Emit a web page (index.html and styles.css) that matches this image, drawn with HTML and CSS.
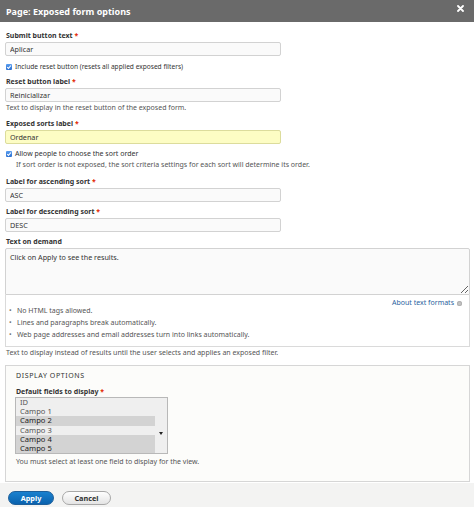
FILE: index.html
```html
<!DOCTYPE html>
<html lang="en">
<head>
<meta charset="utf-8">
<title>Page: Exposed form options</title>
<link rel="stylesheet" href="styles.css">
</head>
<body>
<div class="dialog">
  <div class="titlebar">
    <span class="title">Page: Exposed form options</span>
    <span class="close" aria-label="Close"><svg width="7" height="7" viewBox="0 0 7 7"><path d="M1 1L6 6M6 1L1 6" stroke="#fff" stroke-width="1.8" stroke-linecap="round"/></svg></span>
  </div>
  <div class="content">
    <div class="item wide">
      <label class="lbl">Submit button text <span class="req">*</span></label>
      <input class="text" type="text" value="Aplicar">
    </div>
    <div class="item check">
      <span class="cb"><svg width="6" height="6" viewBox="0 0 6 6"><path d="M1.2 3.1L2.5 4.4L4.9 1.5" fill="none" stroke="#fff" stroke-width="1.1"/></svg></span>
      <span class="cbtext">Include reset button (resets all applied exposed filters)</span>
    </div>
    <div class="item wide">
      <label class="lbl">Reset button label <span class="req">*</span></label>
      <input class="text" type="text" value="Reinicializar">
      <div class="desc">Text to display in the reset button of the exposed form.</div>
    </div>
    <div class="item">
      <label class="lbl">Exposed sorts label <span class="req">*</span></label>
      <input class="text warn" type="text" value="Ordenar">
    </div>
    <div class="item check tight">
      <span class="cb"><svg width="6" height="6" viewBox="0 0 6 6"><path d="M1.2 3.1L2.5 4.4L4.9 1.5" fill="none" stroke="#fff" stroke-width="1.1"/></svg></span>
      <span>Allow people to choose the sort order</span>
    </div>
    <div class="desc indent">If sort order is not exposed, the sort criteria settings for each sort will determine its order.</div>
    <div class="item">
      <label class="lbl">Label for ascending sort <span class="req">*</span></label>
      <input class="text" type="text" value="ASC">
    </div>
    <div class="item">
      <label class="lbl">Label for descending sort <span class="req">*</span></label>
      <input class="text" type="text" value="DESC">
    </div>
    <div class="item">
      <label class="lbl">Text on demand</label>
      <textarea class="area">Click on Apply to see the results.</textarea>
      <div class="filter">
        <div class="about"><a href="#">About text formats</a><span class="help"></span></div>
        <ul class="tips">
          <li>No HTML tags allowed.</li>
          <li>Lines and paragraphs break automatically.</li>
          <li>Web page addresses and email addresses turn into links automatically.</li>
        </ul>
      </div>
      <div class="desc">Text to display instead of results until the user selects and applies an exposed filter.</div>
    </div>
    <div class="fieldset">
      <div class="legend">DISPLAY OPTIONS</div>
      <label class="lbl">Default fields to display <span class="req">*</span></label>
      <div class="select">
        <div class="opts">
          <div class="opt">ID</div>
          <div class="opt">Campo 1</div>
          <div class="opt sel">Campo 2</div>
          <div class="opt">Campo 3</div>
          <div class="opt sel">Campo 4</div>
          <div class="opt sel">Campo 5</div>
        </div>
        <div class="scroll"><span class="arrow"></span></div>
      </div>
      <div class="desc">You must select at least one field to display for the view.</div>
    </div>
  </div>
  <div class="buttons">
    <button class="btn primary" type="button">Apply</button>
    <button class="btn" type="button">Cancel</button>
  </div>
</div>
</body>
</html>
```
FILE: styles.css
```css
html, body {
  margin: 0;
  padding: 0;
  background: #fff;
}
body {
  font-family: "Noto Sans", "DejaVu Sans", sans-serif;
  font-size: 7px;
  color: #333;
}
.dialog {
  width: 474px;
  height: 507px;
  display: flex;
  flex-direction: column;
  overflow: hidden;
}
.titlebar {
  height: 22px;
  flex: none;
  background: #6a6a6a;
  display: flex;
  align-items: center;
  justify-content: space-between;
  padding: 0 10px 0 6px;
  box-sizing: border-box;
}
.title {
  color: #fff;
  font-weight: 700;
  font-size: 9px;
}
.close {
  display: flex;
  margin-top: -6px;
}
.content {
  flex: 1;
  padding: 9px 4px 0 5px;
}
.item {
  margin-bottom: 5px;
}
.item.wide {
  margin-bottom: 6px;
}
.item.tight {
  margin-bottom: 1px;
}
.lbl {
  display: block;
  font-weight: 700;
  font-size: 7px;
  line-height: 10px;
  padding-left: 1px;
  margin-bottom: 1px;
  color: #333;
}
.req {
  color: #e32700;
}
.text {
  display: block;
  width: 276px;
  height: 14px;
  box-sizing: border-box;
  margin: 0;
  padding: 0 4px;
  border: 1px solid #d2d2d2;
  border-radius: 2px;
  background: #fafafa;
  font-family: inherit;
  font-size: 7.2px;
  color: #333;
  outline: none;
}
.text.warn {
  background: #fdfdc4;
  border-color: #dcdc9c;
}
.check {
  display: flex;
  align-items: center;
  height: 10px;
  line-height: 10px;
  padding-left: 1px;
}
.cbtext {
  font-size: 6.6px;
}
.cb {
  width: 6px;
  height: 6px;
  border-radius: 1px;
  background: linear-gradient(#5a9ef0, #2a6fd0);
  display: flex;
  margin-right: 3px;
}
.desc {
  line-height: 10px;
  margin-top: 1px;
  padding-left: 1px;
  color: #555;
}
.desc.indent {
  padding-left: 11px;
  margin-top: 0;
  margin-bottom: 7px;
}
.area {
  display: block;
  width: 465px;
  height: 47px;
  box-sizing: border-box;
  margin: 0;
  padding: 3px 4px;
  border: 1px solid #d2d2d2;
  border-radius: 2px 2px 0 0;
  background: #fafafa;
  font-family: inherit;
  font-size: 7.2px;
  color: #333;
  resize: vertical;
  outline: none;
}
.filter {
  width: 465px;
  box-sizing: border-box;
  border: 1px solid #dadada;
  border-top: none;
  padding: 5px 7px 5px 0;
}
.about {
  display: flex;
  justify-content: flex-end;
  align-items: center;
  line-height: 6px;
  height: 6px;
}
.about a {
  color: #2a5f9e;
  text-decoration: none;
  font-size: 7px;
}
.help {
  width: 5px;
  height: 5px;
  margin-left: 3px;
  border-radius: 50%;
  background: #c4c4c4;
  box-shadow: inset 0 0 0 1px #b0b0b0;
}
.tips {
  list-style: none;
  margin: -1px 0 0;
  padding: 0 0 0 3px;
  line-height: 12px;
  color: #555;
}
.tips li::before {
  content: "\2022";
  display: inline-block;
  width: 8px;
  color: #777;
}
.fieldset {
  margin-top: 7px;
  width: 465px;
  height: 117px;
  box-sizing: border-box;
  border: 1px solid #d6d6d6;
  background: #fcfcfa;
  padding: 5px 9px 0;
}
.legend {
  line-height: 10px;
  font-size: 7px;
  letter-spacing: 0.6px;
  color: #333;
  margin-bottom: 6px;
  padding-left: 1px;
}
.fieldset .lbl {
  margin-bottom: 0;
}
.select {
  width: 153px;
  height: 57px;
  box-sizing: border-box;
  border: 1px solid #b8b8b8;
  background: #efefef;
  display: flex;
  overflow: hidden;
}
.opts {
  flex: 1;
}
.opt {
  height: 9.2px;
  line-height: 9.2px;
  font-size: 7.6px;
  padding-left: 4px;
  color: #555;
  overflow: hidden;
}
.opt.sel {
  background: #d3d3d3;
  color: #222;
}
.scroll {
  width: 12px;
  display: flex;
  justify-content: center;
  align-items: flex-start;
  padding-top: 34px;
  box-sizing: border-box;
}
.arrow {
  width: 0;
  height: 0;
  border-left: 2px solid transparent;
  border-right: 2px solid transparent;
  border-top: 3px solid #222;
}
.fieldset .desc {
  margin-top: 3px;
}
.buttons {
  flex: none;
  height: 24px;
  background: #f3f3f2;
  display: flex;
  align-items: flex-start;
  gap: 8px;
  padding: 8px 0 0 8px;
  box-sizing: border-box;
}
.btn {
  height: 14px;
  margin: 0;
  padding: 0;
  border-radius: 7px;
  font-family: inherit;
  font-size: 7.3px;
  font-weight: 700;
  line-height: 12px;
  cursor: pointer;
  width: 49px;
  border: 1px solid #a8a8a8;
  background: linear-gradient(#fefefe, #e4e4e4);
  color: #333;
}
.btn.primary {
  width: 46px;
  border-color: #1d5f9a;
  background: linear-gradient(#1a81cf, #0a62ae);
  color: #fff;
}
```
